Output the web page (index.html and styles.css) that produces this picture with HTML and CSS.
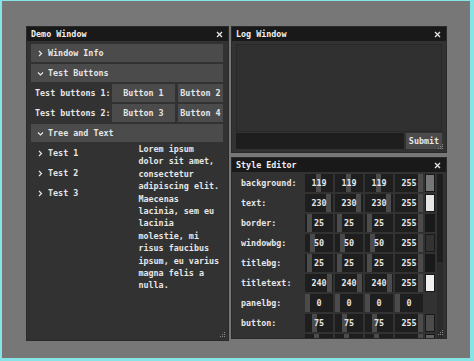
FILE: index.html
```
<!DOCTYPE html>
<html lang="en">
<head>
  <meta charset="UTF-8" />
  <title>microui demo</title>
  <link rel="stylesheet" href="styles.css">
</head>
<body>
  <div class="desk">

    <!-- Demo window -->
    <div class="window demo">
      <div class="titlebar">
        <span>Demo Window</span>
        <svg class="close" width="7" height="7" viewBox="0 0 7 7"><path d="M1 1L6 6M6 1L1 6"/></svg>
      </div>
      <div class="body">
        <div class="header">
          <svg class="chev" width="7" height="7" viewBox="0 0 7 7"><path d="M2 1L4.5 3.5L2 6"/></svg>
          Window Info
        </div>
        <div class="header">
          <svg class="chev" width="7" height="7" viewBox="0 0 7 7"><path d="M1 2.5L3.5 5L6 2.5"/></svg>
          Test Buttons
        </div>
        <div class="btn-row">
          <span class="label">Test buttons 1:</span>
          <div class="btn">Button 1</div>
          <div class="btn">Button 2</div>
        </div>
        <div class="btn-row">
          <span class="label">Test buttons 2:</span>
          <div class="btn">Button 3</div>
          <div class="btn">Button 4</div>
        </div>
        <div class="header">
          <svg class="chev" width="7" height="7" viewBox="0 0 7 7"><path d="M1 2.5L3.5 5L6 2.5"/></svg>
          Tree and Text
        </div>
        <div class="tree-text">
          <div class="tree">
            <div class="node"><svg class="chev" width="7" height="7" viewBox="0 0 7 7"><path d="M2 1L4.5 3.5L2 6"/></svg>Test 1</div>
            <div class="node"><svg class="chev" width="7" height="7" viewBox="0 0 7 7"><path d="M2 1L4.5 3.5L2 6"/></svg>Test 2</div>
            <div class="node"><svg class="chev" width="7" height="7" viewBox="0 0 7 7"><path d="M2 1L4.5 3.5L2 6"/></svg>Test 3</div>
          </div>
          <p class="lorem">Lorem ipsum dolor sit amet, consectetur adipiscing elit. Maecenas lacinia, sem eu lacinia molestie, mi risus faucibus ipsum, eu varius magna felis a nulla.</p>
        </div>
      </div>
      <svg class="grip" width="6" height="6" viewBox="0 0 6 6"><path d="M4 0h1v1h-1zM2 2h1v1h-1zM4 2h1v1h-1zM0 4h1v1h-1zM2 4h1v1h-1zM4 4h1v1h-1z"/></svg>
    </div>

    <!-- Log window -->
    <div class="window log">
      <div class="titlebar">
        <span>Log Window</span>
        <svg class="close" width="7" height="7" viewBox="0 0 7 7"><path d="M1 1L6 6M6 1L1 6"/></svg>
      </div>
      <div class="body">
        <div class="log-panel"></div>
        <div class="input-row">
          <div class="textbox"></div>
          <div class="btn">Submit</div>
        </div>
      </div>
      <svg class="grip" width="6" height="6" viewBox="0 0 6 6"><path d="M4 0h1v1h-1zM2 2h1v1h-1zM4 2h1v1h-1zM0 4h1v1h-1zM2 4h1v1h-1zM4 4h1v1h-1z"/></svg>
    </div>

    <!-- Style editor -->
    <div class="window style">
      <div class="titlebar">
        <span>Style Editor</span>
        <svg class="close" width="7" height="7" viewBox="0 0 7 7"><path d="M1 1L6 6M6 1L1 6"/></svg>
      </div>
      <div class="body">
        <div class="style-grid" id="styleGrid"></div>
        <div class="scrollbar"><div class="thumb"></div></div>
      </div>
      <svg class="grip" width="6" height="6" viewBox="0 0 6 6"><path d="M4 0h1v1h-1zM2 2h1v1h-1zM4 2h1v1h-1zM0 4h1v1h-1zM2 4h1v1h-1zM4 4h1v1h-1z"/></svg>
    </div>

  </div>

  <script>
    const colores = [
      ['background:', [119, 119, 119, 255]],
      ['text:', [230, 230, 230, 255]],
      ['border:', [25, 25, 25, 255]],
      ['windowbg:', [50, 50, 50, 255]],
      ['titlebg:', [25, 25, 25, 255]],
      ['titletext:', [240, 240, 240, 255]],
      ['panelbg:', [0, 0, 0, 0]],
      ['button:', [75, 75, 75, 255]],
      ['', [95, 95, 95, 255]]  // fila cortada por el borde de la ventana
    ];

    const grid = document.getElementById('styleGrid');
    colores.forEach(([nombre, valores]) => {
      const label = document.createElement('span');
      label.className = 'label';
      label.textContent = nombre;
      grid.appendChild(label);

      valores.forEach(v => {
        const cell = document.createElement('div');
        cell.className = 'slider';
        const texto = nombre ? `<span>${v}</span>` : '';
        cell.innerHTML = `<div class="knob" style="left:${(v / 255 * 23).toFixed(1)}px"></div>${texto}`;
        grid.appendChild(cell);
      });

      const swatch = document.createElement('div');
      swatch.className = 'swatch';
      const [r, g, b, a] = valores;
      if (a > 0) {
        swatch.style.background = `rgb(${r}, ${g}, ${b})`;
      } else {
        swatch.classList.add('empty');
      }
      grid.appendChild(swatch);
    });
  </script>
</body>
</html>
```

FILE: styles.css
```
body {
  margin: 0;
  padding: 1px 4px 3px 2px;
  background: #86e4e6;
  font-family: 'DejaVu Sans Mono', 'Liberation Mono', monospace;
  font-weight: bold;
  font-size: 8.4px;
  color: #e6e6e6;
}

.desk {
  position: relative;
  height: 357px;
  background: #777777;
  overflow: hidden;
}

/* Ventanas */
.window {
  position: absolute;
  background: #323232;
  overflow: hidden;
  box-shadow: 0 0 0 1px #2a2a2a;
}

.demo {
  left: 25px;
  top: 26px;
  width: 201px;
  height: 313px;
}

.log {
  left: 230px;
  top: 26px;
  width: 214px;
  height: 125px;
}

.style {
  left: 230px;
  top: 157px;
  width: 214px;
  height: 180px;
}

.titlebar {
  height: 14px;
  background: #191919;
  color: #f0f0f0;
  display: flex;
  align-items: center;
  justify-content: space-between;
  padding: 0 5px 0 4px;
}

.close path {
  stroke: #e6e6e6;
  stroke-width: 1.3;
  fill: none;
}

.grip {
  position: absolute;
  right: 2px;
  bottom: 2px;
}

.grip path {
  fill: #8a8a8a;
}

.chev path {
  stroke: #e6e6e6;
  stroke-width: 1.2;
  fill: none;
}

/* Demo window */
.demo .body {
  padding: 3px 5px 0 4px;
  display: flex;
  flex-direction: column;
  gap: 2px;
}

.header {
  height: 18px;
  background: #4b4b4b;
  display: flex;
  align-items: center;
  gap: 4px;
  padding-left: 6px;
}

.btn-row {
  display: grid;
  grid-template-columns: 78px 63px 45px;
  gap: 3px;
  height: 18px;
}

.btn-row .label {
  display: flex;
  align-items: center;
  padding-left: 4px;
  white-space: nowrap;
}

.btn {
  background: #4b4b4b;
  display: flex;
  align-items: center;
  justify-content: center;
}

.tree-text {
  display: flex;
}

.tree {
  width: 108px;
}

.node {
  height: 18px;
  margin-bottom: 2px;
  display: flex;
  align-items: center;
  gap: 4px;
  padding-left: 6px;
}

.lorem {
  margin: -1px 0 0;
  width: 85px;
  line-height: 12.4px;
}

/* Log window */
.log .body {
  padding: 3px 4px 0;
}

.log-panel {
  height: 86px;
  background: #303030;
  border: 1px solid #282828;
}

.input-row {
  display: flex;
  gap: 2px;
  height: 16px;
  margin-top: 1px;
}

.textbox {
  flex: 1;
  background: #1e1e1e;
}

.input-row .btn {
  width: 36px;
}

/* Style editor */
.style .body {
  display: flex;
  gap: 2px;
  padding: 2px 3px 0 4px;
}

.style-grid {
  display: grid;
  grid-template-columns: 67px repeat(4, 28px) 10px;
  grid-auto-rows: 18px;
  column-gap: 2px;
  row-gap: 2px;
}

.style-grid .label {
  display: flex;
  align-items: center;
  padding-left: 5px;
  white-space: nowrap;
}

.slider {
  position: relative;
  background: #1e1e1e;
  display: flex;
  align-items: center;
  justify-content: center;
}

.slider span {
  position: relative;
}

.knob {
  position: absolute;
  top: 0;
  bottom: 0;
  width: 5px;
  background: #4b4b4b;
}

.swatch {
  box-shadow: inset 0 0 0 1px #191919;
}

.swatch.empty {
  box-shadow: none;
}

.scrollbar {
  width: 6px;
  height: 170px;
  background: #2b2b2b;
}

.scrollbar .thumb {
  height: 88px;
  background: #1e1e1e;
}
```
